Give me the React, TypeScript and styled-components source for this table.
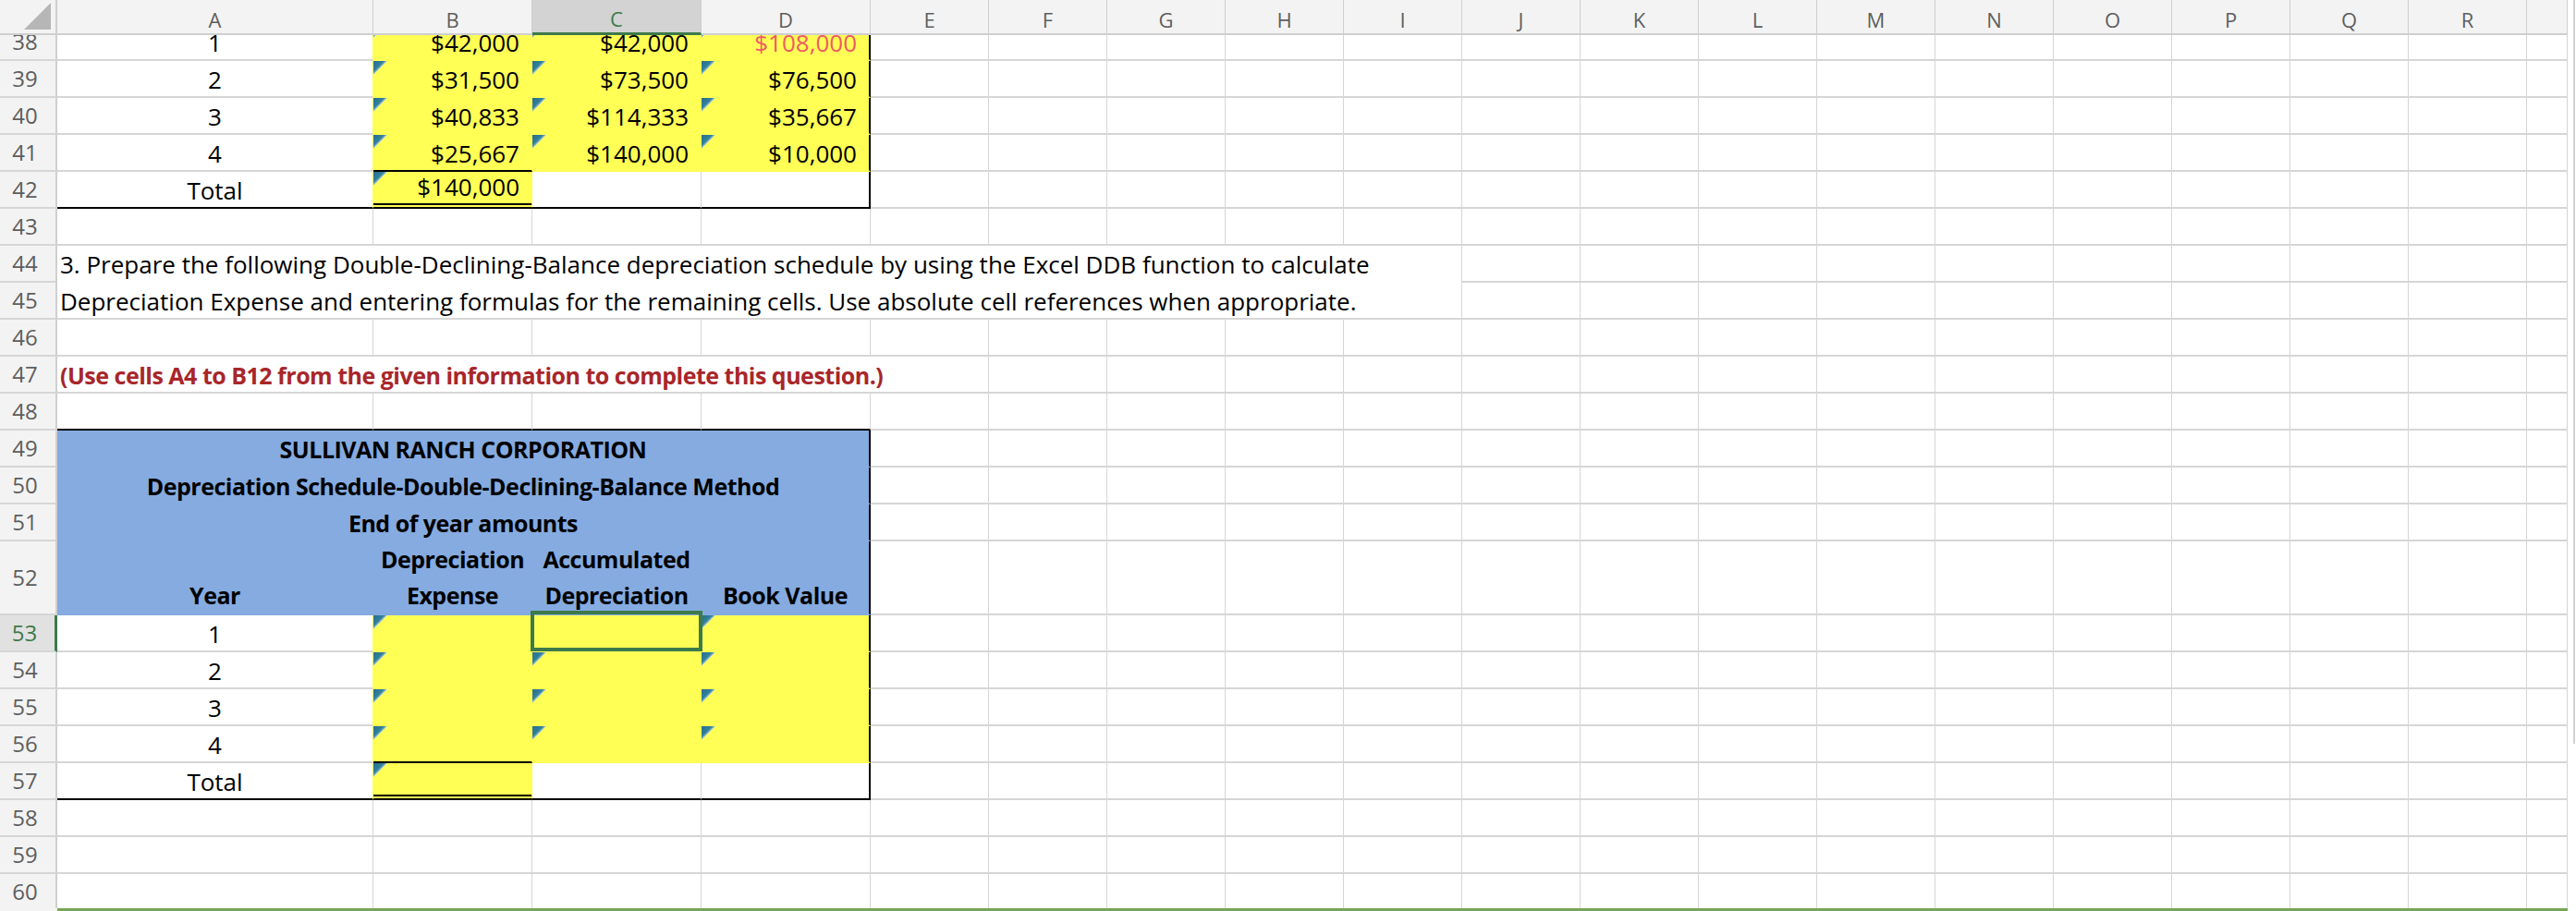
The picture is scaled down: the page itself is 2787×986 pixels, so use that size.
import React from 'react';
import styled, { createGlobalStyle } from 'styled-components';

const GRID_COLS = '62px 342px 172px 183px 183px repeat(14, 128px) 44px';
const GRID_ROWS = 'repeat(14, 40px) 80px repeat(8, 40px)';
const LETTERS = ['A', 'B', 'C', 'D', 'E', 'F', 'G', 'H', 'I', 'J', 'K', 'L', 'M', 'N', 'O', 'P', 'Q', 'R', 'S'];
const FIRST_ROW = 38;
const LAST_ROW = 60;
const ACTIVE_ROW = 53;
const ACTIVE_COL = 3;

const GRID_LINE = '#d6d6d6';
const HEAD_LINE = '#cfcfcf';
const HEAD_BG = '#f3f3f3';
const GREEN = '#3d7a4a';
const YELLOW = '#ffff55';
const BLUE = '#85abe0';

type Fill = 'yellow' | 'blue';
type Edge = 'black' | 'double';
type Align = 'left' | 'center' | 'right';

interface Spec {
  col: number;
  text?: string;
  lines?: string[];
  align?: Align;
  fill?: Fill;
  bold?: boolean;
  tone?: 'red' | 'pink';
  span?: number;
  rowSpan?: number;
  right?: Edge;
  bottom?: Edge;
  note?: boolean;
  selected?: boolean;
}

const fillColor = (f?: Fill) => (f === 'yellow' ? YELLOW : f === 'blue' ? BLUE : undefined);

const money = (col: number, text: string, extra: Partial<Spec> = {}): Spec => ({
  col,
  text,
  align: 'right',
  fill: 'yellow',
  note: true,
  ...extra,
});

const SPECS: Record<number, Spec[]> = {
  38: [
    { col: 1, text: '1', align: 'center' },
    money(2, '$42,000'),
    money(3, '$42,000'),
    money(4, '$108,000', { tone: 'pink', right: 'black' }),
  ],
  39: [
    { col: 1, text: '2', align: 'center' },
    money(2, '$31,500'),
    money(3, '$73,500'),
    money(4, '$76,500', { right: 'black' }),
  ],
  40: [
    { col: 1, text: '3', align: 'center' },
    money(2, '$40,833'),
    money(3, '$114,333'),
    money(4, '$35,667', { right: 'black' }),
  ],
  41: [
    { col: 1, text: '4', align: 'center' },
    money(2, '$25,667', { bottom: 'black' }),
    money(3, '$140,000'),
    money(4, '$10,000', { right: 'black' }),
  ],
  42: [
    { col: 1, text: 'Total', align: 'center', bottom: 'black' },
    money(2, '$140,000', { bottom: 'double' }),
    { col: 3, bottom: 'black' },
    { col: 4, bottom: 'black', right: 'black' },
  ],
  44: [
    {
      col: 1,
      span: 9,
      rowSpan: 2,
      align: 'left',
      lines: [
        '3. Prepare the following Double-Declining-Balance depreciation schedule by using the Excel DDB function to calculate',
        'Depreciation Expense and entering formulas for the remaining cells. Use absolute cell references when appropriate.',
      ],
    },
  ],
  47: [
    {
      col: 1,
      span: 5,
      align: 'left',
      bold: true,
      tone: 'red',
      text: '(Use cells A4 to B12 from the given information to complete this question.)',
    },
  ],
  48: [
    { col: 1, bottom: 'black' },
    { col: 2, bottom: 'black' },
    { col: 3, bottom: 'black' },
    { col: 4, bottom: 'black' },
  ],
  49: [{ col: 1, span: 4, fill: 'blue', bold: true, align: 'center', right: 'black', text: 'SULLIVAN RANCH CORPORATION' }],
  50: [
    {
      col: 1,
      span: 4,
      fill: 'blue',
      bold: true,
      align: 'center',
      right: 'black',
      text: 'Depreciation Schedule-Double-Declining-Balance Method',
    },
  ],
  51: [{ col: 1, span: 4, fill: 'blue', bold: true, align: 'center', right: 'black', text: 'End of year amounts' }],
  52: [
    { col: 1, fill: 'blue', bold: true, align: 'center', lines: ['Year'] },
    { col: 2, fill: 'blue', bold: true, align: 'center', lines: ['Depreciation', 'Expense'] },
    { col: 3, fill: 'blue', bold: true, align: 'center', lines: ['Accumulated', 'Depreciation'] },
    { col: 4, fill: 'blue', bold: true, align: 'center', right: 'black', lines: ['Book Value'] },
  ],
  53: [
    { col: 1, text: '1', align: 'center' },
    { col: 2, fill: 'yellow', note: true },
    { col: 3, fill: 'yellow', selected: true },
    { col: 4, fill: 'yellow', note: true, right: 'black' },
  ],
  54: [
    { col: 1, text: '2', align: 'center' },
    { col: 2, fill: 'yellow', note: true },
    { col: 3, fill: 'yellow', note: true },
    { col: 4, fill: 'yellow', note: true, right: 'black' },
  ],
  55: [
    { col: 1, text: '3', align: 'center' },
    { col: 2, fill: 'yellow', note: true },
    { col: 3, fill: 'yellow', note: true },
    { col: 4, fill: 'yellow', note: true, right: 'black' },
  ],
  56: [
    { col: 1, text: '4', align: 'center' },
    { col: 2, fill: 'yellow', note: true, bottom: 'black' },
    { col: 3, fill: 'yellow', note: true },
    { col: 4, fill: 'yellow', note: true, right: 'black' },
  ],
  57: [
    { col: 1, text: 'Total', align: 'center', bottom: 'black' },
    { col: 2, fill: 'yellow', note: true, bottom: 'double' },
    { col: 3, bottom: 'black' },
    { col: 4, bottom: 'black', right: 'black' },
  ],
};

const specAt = (row: number, col: number): Spec | undefined => {
  for (let r = row; r >= FIRST_ROW; r--) {
    const found = (SPECS[r] || []).find(
      (s) => col >= s.col && col < s.col + (s.span || 1) && row < r + (s.rowSpan || 1),
    );
    if (found) return found;
  }
  return undefined;
};

const fillAt = (row: number, col: number) => fillColor(specAt(row, col)?.fill);

const rightEdge = (row: number, s: Spec) => {
  if (s.right === 'black') return '2px solid #000';
  const own = fillColor(s.fill);
  if (own) return `1px solid ${own}`;
  const next = fillAt(row, s.col + (s.span || 1));
  return `1px solid ${next || GRID_LINE}`;
};

const bottomEdge = (row: number, s: Spec) => {
  if (s.bottom === 'black') return '2px solid #000';
  if (s.bottom === 'double') return '6px double #000';
  const own = fillColor(s.fill);
  if (own) return `2px solid ${own}`;
  const below = fillAt(row + (s.rowSpan || 1), s.col);
  return `2px solid ${below || GRID_LINE}`;
};

const GlobalStyle = createGlobalStyle`
  html, body {
    margin: 0;
    padding: 0;
    background: #ffffff;
    overflow: hidden;
  }
  #root {
    width: 2787px;
    height: 986px;
  }
`;

const Frame = styled.div`
  display: flex;
  width: 2787px;
  height: 986px;
  overflow: hidden;
  background: #ffffff;
  font-family: 'Open Sans', 'Noto Sans', sans-serif;
`;

const Main = styled.div`
  display: flex;
  flex-direction: column;
  width: 2778px;
  height: 100%;
`;

const ScrollStrip = styled.div`
  width: 9px;
  height: 100%;
  background: #ffffff;
  display: flex;
  justify-content: flex-end;
`;

const ScrollThumb = styled.div`
  width: 2px;
  height: 805px;
  margin-right: 1px;
  background: #d2d2d2;
`;

const HeaderRow = styled.div`
  display: grid;
  grid-template-columns: ${GRID_COLS};
  height: 38px;
  flex: none;
  background: ${HEAD_BG};
`;

const Corner = styled.div`
  display: flex;
  align-items: flex-end;
  justify-content: flex-end;
  box-sizing: border-box;
  padding: 0 5px 4px 0;
  border-right: 2px solid ${HEAD_LINE};
  border-bottom: 2px solid ${HEAD_LINE};
`;

const ColHead = styled.div<{ $active?: boolean }>`
  display: flex;
  align-items: center;
  justify-content: center;
  box-sizing: border-box;
  padding-top: 5px;
  border-right: 1px solid ${HEAD_LINE};
  border-bottom: ${(p) => (p.$active ? `3px solid ${GREEN}` : `2px solid ${HEAD_LINE}`)};
  background: ${(p) => (p.$active ? '#d3d3d3' : HEAD_BG)};
  color: ${(p) => (p.$active ? GREEN : '#5e5e5e')};
  font-size: 22px;
  line-height: 28px;
`;

const Viewport = styled.div`
  flex: 1;
  min-height: 0;
  overflow: hidden;
`;

const Body = styled.div`
  display: grid;
  grid-template-columns: ${GRID_COLS};
  grid-template-rows: ${GRID_ROWS};
  margin-top: -12px;
`;

const RowNum = styled.div<{ $row: number; $active?: boolean }>`
  grid-column: 1;
  grid-row: ${(p) => p.$row};
  display: flex;
  align-items: center;
  justify-content: center;
  box-sizing: border-box;
  padding-right: 6px;
  background: ${(p) => (p.$active ? '#e1e1e1' : HEAD_BG)};
  border-right: ${(p) => (p.$active ? `3px solid ${GREEN}` : `2px solid ${HEAD_LINE}`)};
  border-bottom: 2px solid ${GRID_LINE};
  color: ${(p) => (p.$active ? GREEN : '#5e5e5e')};
  font-size: 24px;
  line-height: 30px;
`;

const Cell = styled.div<{
  $row: number;
  $col: number;
  $span: number;
  $rowSpan: number;
  $bg: string;
  $right: string;
  $bottom: string;
  $align: Align;
  $bold?: boolean;
  $tone?: 'red' | 'pink';
  $lineHeight: number;
}>`
  grid-column: ${(p) => p.$col + 1} / span ${(p) => p.$span};
  grid-row: ${(p) => p.$row} / span ${(p) => p.$rowSpan};
  position: relative;
  box-sizing: border-box;
  min-width: 0;
  display: flex;
  flex-direction: column;
  justify-content: flex-end;
  align-items: ${(p) => (p.$align === 'left' ? 'flex-start' : p.$align === 'right' ? 'flex-end' : 'center')};
  gap: ${(p) => (p.$lineHeight === 36 ? '4px' : '0')};
  padding: ${(p) => (p.$align === 'left' ? '0 0 0 3px' : p.$align === 'right' ? '0 13px 0 0' : '0')};
  background: ${(p) => p.$bg};
  border-right: ${(p) => p.$right};
  border-bottom: ${(p) => p.$bottom};
  color: ${(p) => (p.$tone === 'red' ? '#a8262a' : p.$tone === 'pink' ? '#ee5b66' : '#000000')};
  font-size: ${(p) => (p.$bold ? '25px' : '26px')};
  letter-spacing: ${(p) => (p.$bold ? '-0.5px' : '0')};
  font-weight: ${(p) => (p.$bold ? 700 : 400)};
  line-height: ${(p) => p.$lineHeight}px;
  white-space: nowrap;
`;

const Line = styled.span`
  display: block;
`;

const Note = styled.span`
  position: absolute;
  top: 0;
  left: 0;
  width: 15px;
  height: 15px;
  clip-path: polygon(0 0, 100% 0, 0 100%);
  background: linear-gradient(135deg, #2a6e8c 0%, #31809b 38%, #9cc2cc 48%, #e6f0ec 52%);
`;

const Selection = styled.span`
  position: absolute;
  top: -5px;
  left: -2px;
  right: -2px;
  bottom: -1px;
  border: 4px solid ${GREEN};
  pointer-events: none;
  z-index: 2;
`;

const BottomBar = styled.div`
  display: flex;
  height: 3px;
  flex: none;
`;

const BarGutter = styled.div`
  width: 62px;
  background: ${HEAD_BG};
`;

const BarLine = styled.div`
  flex: 1;
  background: #77a556;
`;

const CornerMark = () => (
  <svg width="29" height="29" viewBox="0 0 29 29" aria-hidden="true">
    <polygon points="29,0 29,29 0,29" fill="#b6b6b6" />
  </svg>
);

const rowCells = (row: number): Spec[] => {
  const out: Spec[] = [];
  let col = 1;
  while (col <= LETTERS.length) {
    const own = (SPECS[row] || []).find((s) => s.col === col);
    if (own) {
      out.push(own);
      col += own.span || 1;
      continue;
    }
    const cover = specAt(row, col);
    if (cover) {
      col += 1;
      continue;
    }
    out.push({ col });
    col += 1;
  }
  return out;
};

export default function App() {
  const rows: number[] = [];
  for (let r = FIRST_ROW; r <= LAST_ROW; r++) rows.push(r);

  return (
    <>
      <GlobalStyle />
      <Frame>
        <Main>
          <HeaderRow>
            <Corner>
              <CornerMark />
            </Corner>
            {LETTERS.map((l, i) => (
              <ColHead key={l} $active={i + 1 === ACTIVE_COL}>
                {i < 18 ? l : ''}
              </ColHead>
            ))}
          </HeaderRow>
          <Viewport>
            <Body>
              {rows.map((row) => {
                const gridRow = row - FIRST_ROW + 1;
                return (
                  <React.Fragment key={row}>
                    <RowNum $row={gridRow} $active={row === ACTIVE_ROW}>
                      {row}
                    </RowNum>
                    {rowCells(row).map((s) => (
                      <Cell
                        key={`${row}-${s.col}`}
                        $row={gridRow}
                        $col={s.col}
                        $span={s.span || 1}
                        $rowSpan={s.rowSpan || 1}
                        $bg={fillColor(s.fill) || '#ffffff'}
                        $right={rightEdge(row, s)}
                        $bottom={bottomEdge(row, s)}
                        $align={s.align || 'left'}
                        $bold={s.bold}
                        $tone={s.tone}
                        $lineHeight={s.lines && s.lines.length > 1 && row !== 52 ? 36 : s.lines ? 39 : 36}
                      >
                        {s.note && <Note />}
                        {s.selected && <Selection />}
                        {s.lines ? s.lines.map((t) => <Line key={t}>{t}</Line>) : s.text && <Line>{s.text}</Line>}
                      </Cell>
                    ))}
                  </React.Fragment>
                );
              })}
            </Body>
          </Viewport>
          <BottomBar>
            <BarGutter />
            <BarLine />
          </BottomBar>
        </Main>
        <ScrollStrip>
          <ScrollThumb />
        </ScrollStrip>
      </Frame>
    </>
  );
}
